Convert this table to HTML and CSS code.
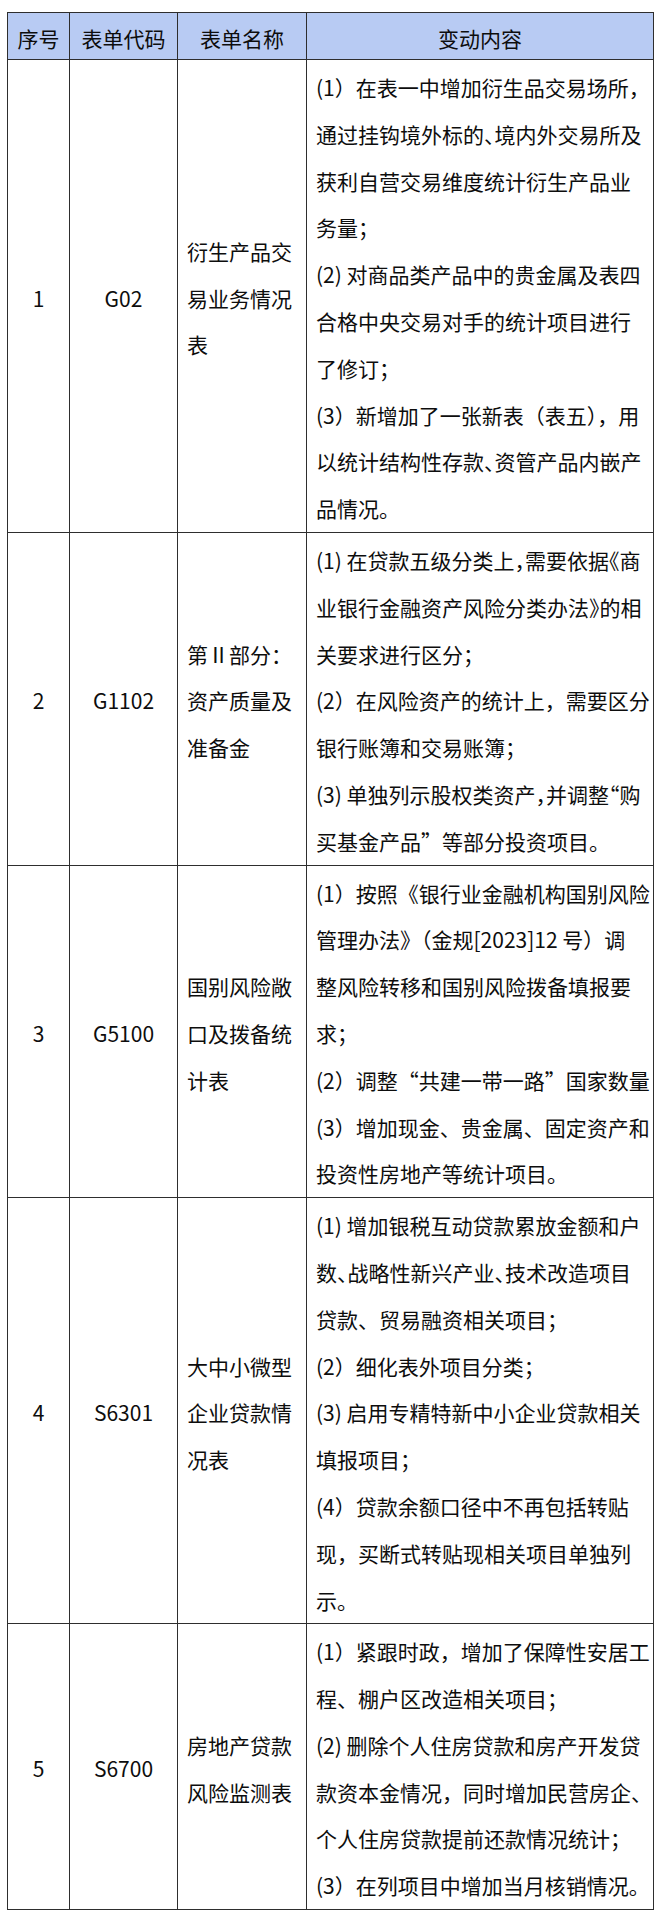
FILE: index.html
```html
<!DOCTYPE html>
<html lang="zh-CN">
<head>
<meta charset="utf-8">
<title>表单变动</title>
<link rel="stylesheet" href="styles.css">
</head>
<body>
<table class="sheet">
  <colgroup>
    <col class="c-num">
    <col class="c-code">
    <col class="c-name">
    <col class="c-desc">
  </colgroup>
  <thead>
    <tr>
      <th>序号</th>
      <th>表单代码</th>
      <th>表单名称</th>
      <th>变动内容</th>
    </tr>
  </thead>
  <tbody>
    <tr class="r1">
      <td class="num">1</td>
      <td class="code">G02</td>
      <td class="name">衍生产品交易业务情况表</td>
      <td class="desc">(1）在表一中增加衍生品交易场所，<br>通过挂钩境外标的<span class="h">、</span>境内外交易所及<br>获利自营交易维度统计衍生产品业<br>务量；<br>(2) 对商品类产品中的贵金属及表四<br>合格中央交易对手的统计项目进行<br>了修订；<br>(3）新增加了一张新表（表五），用<br>以统计结构性存款<span class="h">、</span>资管产品内嵌产<br>品情况。</td>
    </tr>
    <tr class="r2">
      <td class="num">2</td>
      <td class="code">G1102</td>
      <td class="name">第Ⅱ部分：资产质量及准备金</td>
      <td class="desc">(1) 在贷款五级分类上<span class="h">，</span>需要依据<span class="h">《</span>商<br>业银行金融资产风险分类办法<span class="h">》</span>的相<br>关要求进行区分；<br>(2）在风险资产的统计上，需要区分<br>银行账簿和交易账簿；<br>(3) 单独列示股权类资产<span class="h">，</span>并调整<span class="h">“</span>购<br>买基金产品”等部分投资项目。</td>
    </tr>
    <tr class="r3">
      <td class="num">3</td>
      <td class="code">G5100</td>
      <td class="name">国别风险敞口及拨备统计表</td>
      <td class="desc">(1）按照《银行业金融机构国别风险<br>管理办法》（金规[2023]12 号）调<br>整风险转移和国别风险拨备填报要<br>求；<br>(2）调整“共建一带一路”国家数量<br>(3）增加现金、贵金属、固定资产和<br>投资性房地产等统计项目。</td>
    </tr>
    <tr class="r4">
      <td class="num">4</td>
      <td class="code">S6301</td>
      <td class="name">大中小微型企业贷款情况表</td>
      <td class="desc">(1) 增加银税互动贷款累放金额和户<br>数<span class="h">、</span>战略性新兴产业<span class="h">、</span>技术改造项目<br>贷款、贸易融资相关项目；<br>(2）细化表外项目分类；<br>(3) 启用专精特新中小企业贷款相关<br>填报项目；<br>(4）贷款余额口径中不再包括转贴<br>现，买断式转贴现相关项目单独列<br>示。</td>
    </tr>
    <tr class="r5">
      <td class="num">5</td>
      <td class="code">S6700</td>
      <td class="name">房地产贷款风险监测表</td>
      <td class="desc">(1）紧跟时政，增加了保障性安居工<br>程、棚户区改造相关项目；<br>(2) 删除个人住房贷款和房产开发贷<br>款资本金情况，同时增加民营房企<span class="h">、</span><br>个人住房贷款提前还款情况统计；<br>(3）在列项目中增加当月核销情况。</td>
    </tr>
  </tbody>
</table>
</body>
</html>
```

FILE: styles.css
```css
body {
  margin: 12px 0 0 7px;
  background: #ffffff;
  color: #0d0d0d;
  font-family: "Noto Sans CJK SC", "Noto Sans", sans-serif;
}

.sheet {
  border-collapse: collapse;
  table-layout: fixed;
  width: 646px;
  font-size: 21px;
}

.c-num { width: 62px; }
.c-code { width: 108px; }
.c-name { width: 129px; }
.c-desc { width: 347px; }

.sheet th,
.sheet td {
  border: 1px solid #2e2e2e;
  padding: 4px 0 0 9px;
  line-height: 46.8px;
  vertical-align: middle;
  font-weight: 400;
}

.sheet th {
  background: #b8cbf3;
  text-align: center;
  padding: 5px 0 0;
  line-height: 41px;
}

.sheet .num,
.sheet .code {
  text-align: center;
  padding-left: 0;
}

.sheet .name {
  text-align: left;
}

.sheet .desc {
  white-space: nowrap;
}

.h {
  font-feature-settings: "halt";
}
```
